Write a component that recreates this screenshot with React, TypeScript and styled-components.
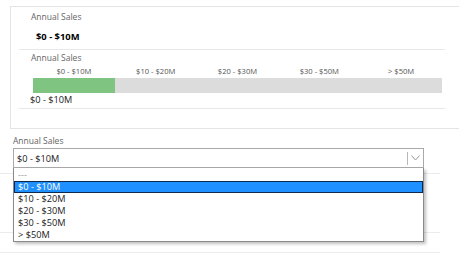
import React from "react";
import styled, { createGlobalStyle } from "styled-components";

const GlobalStyle = createGlobalStyle`
  html, body { margin: 0; padding: 0; background: #ffffff; }
  body { font-family: "Open Sans", "Noto Sans", Arial, sans-serif; color: #222; }
`;

const Page = styled.div`
  width: 474px;
  height: 257px;
  overflow: hidden;
  padding-top: 6px;
  box-sizing: border-box;
`;

const Card = styled.div`
  margin: 0 15px 0 10px;
  height: 123px;
  box-sizing: border-box;
  border-top: 1px solid #e4e4e4;
  border-left: 1px solid #e4e4e4;
  border-bottom: 1px solid #e4e4e4;
  padding-top: 3px;
`;

const Label = styled.div<{ $indent: number }>`
  padding-left: ${(p) => p.$indent}px;
  font-size: 8.5px;
  line-height: 14px;
  color: #666;
`;

const BoldValue = styled.div`
  margin-top: 6px;
  padding-left: 25px;
  font-size: 9.4px;
  line-height: 14px;
  font-weight: 700;
  color: #000;
`;

const Section = styled.div`
  margin: 5px 14px 0 8px;
  border-top: 1px solid #e8e8e8;
  border-bottom: 1px solid #e8e8e8;
  padding: 1px 0 1px 12px;
`;

const Scale = styled.div`
  width: 409px;
  margin-left: 2px;
`;

const ScaleLabels = styled.div`
  display: grid;
  grid-template-columns: repeat(5, 1fr);
  height: 12px;
`;

const ScaleLabel = styled.div`
  text-align: center;
  font-size: 7.6px;
  line-height: 12px;
  color: #555;
`;

const Bar = styled.div`
  margin-top: 1px;
  height: 15px;
  background: #dcdcdc;
  display: flex;
`;

const Fill = styled.div`
  height: 100%;
  background: #7fc481;
`;

const ScaleValue = styled.div`
  font-size: 9.2px;
  line-height: 14px;
  color: #1a1a1a;
  margin-left: -1px;
`;

const Form = styled.div`
  width: 440px;
  position: relative;
`;

const FieldRow = styled.div`
  padding: 5px 0 5px 13px;
  border-bottom: 1px solid #ececec;
`;

const FieldLabel = styled.div`
  font-size: 8.5px;
  line-height: 14px;
  color: #666;
`;

const SelectBox = styled.div`
  width: 411px;
  height: 20px;
  box-sizing: border-box;
  border: 1px solid #a9a9a9;
  display: flex;
  align-items: center;
  padding-left: 3px;
  font-size: 9.2px;
  color: #1a1a1a;
`;

const SelectText = styled.span`
  flex: 1;
`;

const Arrow = styled.div`
  width: 14px;
  height: 13px;
  border-left: 1px solid #b8b8b8;
  display: flex;
  align-items: center;
  justify-content: center;
  margin-right: 1px;
`;

const EmptyRow = styled.div<{ $h: number }>`
  height: ${(p) => p.$h}px;
  border-bottom: 1px solid #ececec;
`;

const Dropdown = styled.ul`
  position: absolute;
  left: 13px;
  top: 39px;
  width: 411px;
  margin: 0;
  padding: 1px 0 0;
  list-style: none;
  box-sizing: border-box;
  border: 1px solid #8a8a8a;
  border-top: none;
  background: #fff;
  box-shadow: 2px 2px 3px rgba(0, 0, 0, 0.25);
`;

const Option = styled.li<{ $selected?: boolean; $muted?: boolean }>`
  height: 12px;
  box-sizing: border-box;
  line-height: 10px;
  font-size: 9.2px;
  padding-left: 3px;
  color: ${(p) => (p.$selected ? "#fff" : p.$muted ? "#999" : "#1a1a1a")};
  background: ${(p) => (p.$selected ? "#1e90ff" : "transparent")};
  border: 1px solid ${(p) => (p.$selected ? "#0d2a4a" : "transparent")};
`;

const ranges = ["$0 - $10M", "$10 - $20M", "$20 - $30M", "$30 - $50M", "> $50M"];

export default function App() {
  return (
    <>
      <GlobalStyle />
      <Page>
        <Card>
          <Label $indent={20}>Annual Sales</Label>
          <BoldValue>$0 - $10M</BoldValue>
          <Section>
            <Label $indent={0}>Annual Sales</Label>
            <Scale>
              <ScaleLabels>
                {ranges.map((r) => (
                  <ScaleLabel key={r}>{r}</ScaleLabel>
                ))}
              </ScaleLabels>
              <Bar>
                <Fill style={{ width: "20%" }} />
              </Bar>
            </Scale>
            <ScaleValue>$0 - $10M</ScaleValue>
          </Section>
        </Card>
        <Form>
          <FieldRow>
            <FieldLabel>Annual Sales</FieldLabel>
            <SelectBox>
              <SelectText>$0 - $10M</SelectText>
              <Arrow>
                <svg width="9" height="6" viewBox="0 0 9 6">
                  <path d="M0.5 0.5 L4.5 5 L8.5 0.5" fill="none" stroke="#9a9a9a" strokeWidth="1" />
                </svg>
              </Arrow>
            </SelectBox>
          </FieldRow>
          <EmptyRow $h={58} />
          <EmptyRow $h={19} />
          <Dropdown>
            <Option $muted>---</Option>
            {ranges.map((r, i) => (
              <Option key={r} $selected={i === 0}>
                {r}
              </Option>
            ))}
          </Dropdown>
        </Form>
      </Page>
    </>
  );
}
